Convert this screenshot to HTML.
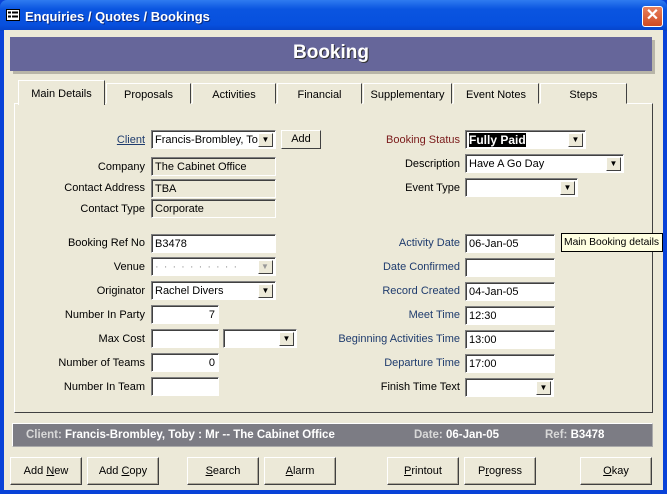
<!DOCTYPE html>
<html><head><style>
*{box-sizing:border-box;margin:0;padding:0}
body{width:667px;height:494px;overflow:hidden;background:#0842d8;font-family:"Liberation Sans",sans-serif;font-size:11px;position:relative}
.a{position:absolute}
#title{left:0;top:0;width:667px;height:31px;background:linear-gradient(#2f7bf0,#0a55e0 30%,#0750de 80%,#0642c8);border-radius:7px 7px 0 0}
#title span{position:absolute;left:25px;top:9px;color:#fff;font-weight:bold;font-size:13px;text-shadow:1px 1px #0a2a80}
#body{left:4px;top:30px;width:659px;height:460px;background:#ece9d8}
.lbl{position:absolute;text-align:right;white-space:nowrap;color:#000}
.blue{color:#1f3c6e}
.inp{position:absolute;background:#fff;border-top:1px solid #808080;border-left:1px solid #808080;border-right:1px solid #fff;border-bottom:1px solid #fff;box-shadow:inset 1px 1px #404040;height:19px;padding:3px 3px;white-space:nowrap;overflow:hidden}
.ro{background:#ece9d8}
.dd{position:absolute;right:2px;top:2px;width:15px;height:14px;background:#ece9d8;border:1px solid;border-color:#fff #404040 #404040 #fff;font-size:8px;text-align:center;line-height:12px}
.tab{position:absolute;top:83px;height:21px;border:1px solid;border-color:#fff #404040 transparent #fff;background:#ece9d8;text-align:center;padding-top:5px}
.btn{position:absolute;top:457px;width:72px;height:28px;background:#ece9d8;border:1px solid;border-color:#fff #404040 #404040 #fff;box-shadow:inset -1px -1px #aca899;text-align:center;line-height:26px}
</style></head><body>
<div id="title" class="a">
<svg class="a" style="left:6px;top:9px" width="14" height="12"><rect x="0.5" y="0.5" width="13" height="11" fill="#fff" stroke="#000"/><rect x="2" y="2.5" width="3" height="2" fill="#000"/><rect x="6" y="2.5" width="6" height="2" fill="#000"/><rect x="2" y="6.5" width="3" height="2" fill="#000"/><rect x="6" y="6.5" width="6" height="2" fill="#000"/></svg>
<span>Enquiries / Quotes / Bookings</span>
<div class="a" style="left:642px;top:6px;width:21px;height:21px;background:linear-gradient(#e8805c,#d04a22);border:1px solid #fff;border-radius:3px;color:#fff;font-weight:bold;font-size:16px;text-align:center;line-height:18px">✕</div>
</div>
<div id="body" class="a"></div>
<div class="a" style="left:10px;top:37px;width:642px;height:34px;background:#66669a;box-shadow:3px 3px #b8b5a8"></div>
<div class="a" style="left:10px;top:42px;width:642px;text-align:center;color:#fff;font-weight:bold;font-size:19px;text-shadow:1px 1px #333">Booking</div>
<div class="a" style="left:14px;top:103px;width:639px;height:310px;border:1px solid;border-color:#fff #404040 #404040 #fff"></div>
<div class="tab" style="left:106px;width:85px">Proposals</div>
<div class="tab" style="left:192px;width:84px">Activities</div>
<div class="tab" style="left:277px;width:85px">Financial</div>
<div class="tab" style="left:363px;width:89px">Supplementary</div>
<div class="tab" style="left:453px;width:86px">Event Notes</div>
<div class="tab" style="left:540px;width:87px">Steps</div>
<div class="tab" style="left:18px;top:80px;width:87px;height:25px;border-bottom:none;padding-top:7px">Main Details</div>

<div class="lbl" style="right:522px;top:134px;color:#1f3c6e;text-decoration:underline">Client</div>
<div class="inp" style="left:151px;top:130px;width:125px">Francis-Brombley, Tob<div class="dd">▼</div></div>
<div class="a" style="left:281px;top:130px;width:40px;height:19px;border:1px solid;border-color:#fff #404040 #404040 #fff;text-align:center;line-height:17px">Add</div>
<div class="lbl" style="right:522px;top:161px">Company</div>
<div class="inp ro" style="left:151px;top:157px;width:125px">The Cabinet Office</div>
<div class="lbl" style="right:522px;top:182px">Contact Address</div>
<div class="inp ro" style="left:151px;top:179px;width:125px">TBA</div>
<div class="lbl" style="right:522px;top:203px">Contact Type</div>
<div class="inp ro" style="left:151px;top:199px;width:125px">Corporate</div>
<div class="lbl" style="right:522px;top:237px">Booking Ref No</div>
<div class="inp" style="left:151px;top:234px;width:125px">B3478</div>
<div class="lbl" style="right:522px;top:261px">Venue</div>
<div class="inp" style="left:151px;top:257px;width:125px;color:#999;letter-spacing:1px">· ·  · · ·  · ·  · · ·<div class="dd">▼</div></div>
<div class="lbl" style="right:522px;top:285px">Originator</div>
<div class="inp" style="left:151px;top:281px;width:125px">Rachel Divers<div class="dd">▼</div></div>
<div class="lbl" style="right:522px;top:309px">Number In Party</div>
<div class="inp" style="left:151px;top:305px;width:68px;text-align:right">7</div>
<div class="lbl" style="right:522px;top:333px">Max Cost</div>
<div class="inp" style="left:151px;top:329px;width:68px"></div>
<div class="inp" style="left:223px;top:329px;width:74px"><div class="dd">▼</div></div>
<div class="lbl" style="right:522px;top:357px">Number of Teams</div>
<div class="inp" style="left:151px;top:353px;width:68px;text-align:right">0</div>
<div class="lbl" style="right:522px;top:381px">Number In Team</div>
<div class="inp" style="left:151px;top:377px;width:68px"></div>

<div class="lbl" style="right:207px;top:134px;color:#7a1a1a">Booking Status</div>
<div class="inp" style="left:465px;top:130px;width:121px;padding-top:2px"><span style="background:#000;color:#fff;font-weight:bold;font-size:12px">Fully Paid</span><div class="dd">▼</div></div>
<div class="lbl" style="right:207px;top:158px">Description</div>
<div class="inp" style="left:465px;top:154px;width:159px">Have A Go Day<div class="dd">▼</div></div>
<div class="lbl" style="right:207px;top:182px">Event Type</div>
<div class="inp" style="left:465px;top:178px;width:113px"><div class="dd">▼</div></div>
<div class="lbl blue" style="right:207px;top:237px">Activity Date</div>
<div class="inp" style="left:465px;top:234px;width:90px">06-Jan-05</div>
<div class="a" style="left:561px;top:233px;width:102px;height:19px;background:#ffffe1;border:1px solid #000;padding:3px 2px;white-space:nowrap;overflow:hidden;font-size:10.3px">Main Booking details</div>
<div class="lbl blue" style="right:207px;top:261px">Date Confirmed</div>
<div class="inp" style="left:465px;top:258px;width:90px"></div>
<div class="lbl blue" style="right:207px;top:285px">Record Created</div>
<div class="inp" style="left:465px;top:282px;width:90px">04-Jan-05</div>
<div class="lbl blue" style="right:207px;top:309px">Meet Time</div>
<div class="inp" style="left:465px;top:306px;width:90px">12:30</div>
<div class="lbl blue" style="right:207px;top:333px">Beginning Activities Time</div>
<div class="inp" style="left:465px;top:330px;width:90px">13:00</div>
<div class="lbl blue" style="right:207px;top:357px">Departure Time</div>
<div class="inp" style="left:465px;top:354px;width:90px">17:00</div>
<div class="lbl" style="right:207px;top:381px">Finish Time Text</div>
<div class="inp" style="left:465px;top:378px;width:89px"><div class="dd">▼</div></div>

<div class="a" style="left:12px;top:423px;width:641px;height:24px;background:#7c7c84;border:1px solid;border-color:#fff #aaa #aaa #fff;color:#d8d8d8;font-weight:bold;font-size:11.5px;padding-top:5px;white-space:nowrap">
<span class="a" style="left:13px">Client: <span style="color:#fff">Francis-Brombley, Toby : Mr -- The Cabinet Office</span></span>
<span class="a" style="left:401px">Date: <span style="color:#fff">06-Jan-05</span></span>
<span class="a" style="left:532px">Ref: <span style="color:#fff">B3478</span></span>
</div>
<div class="btn" style="left:10px">Add <u>N</u>ew</div>
<div class="btn" style="left:87px">Add <u>C</u>opy</div>
<div class="btn" style="left:187px"><u>S</u>earch</div>
<div class="btn" style="left:264px"><u>A</u>larm</div>
<div class="btn" style="left:387px"><u>P</u>rintout</div>
<div class="btn" style="left:464px">P<u>r</u>ogress</div>
<div class="btn" style="left:580px"><u>O</u>kay</div>
</body></html>
